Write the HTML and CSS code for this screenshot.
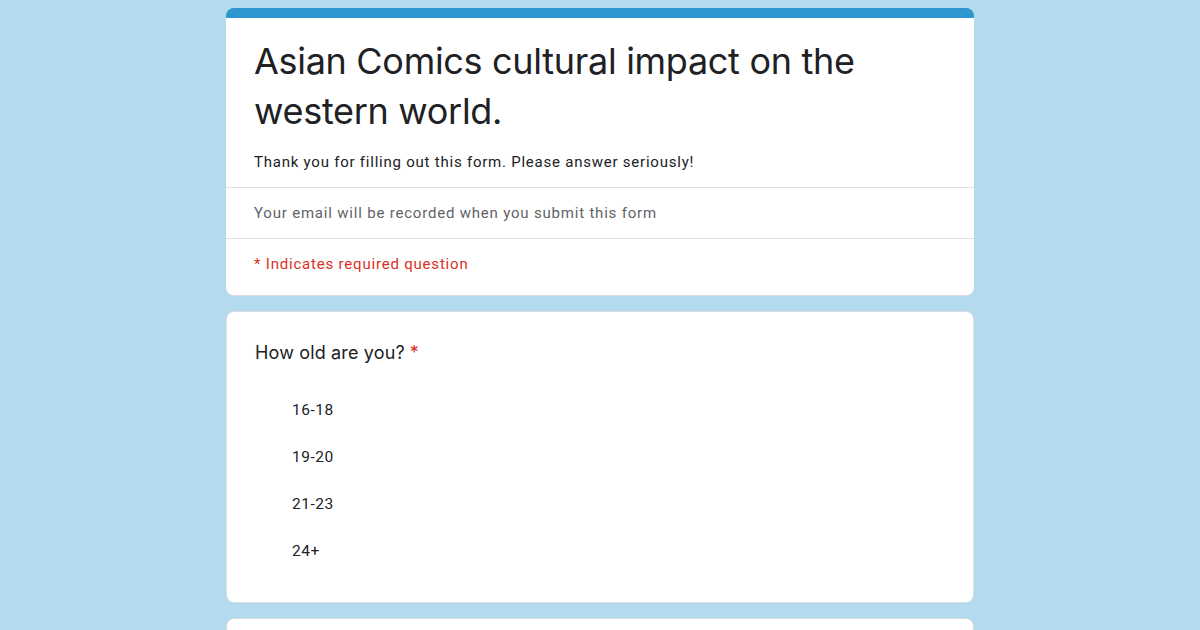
FILE: index.html
```html
<!DOCTYPE html>
<html lang="en">
<head>
<meta charset="utf-8">
<title>Asian Comics cultural impact on the western world.</title>
<link rel="stylesheet" href="styles.css">
</head>
<body>
<main class="form">
  <section class="card header-card">
    <div class="header-main">
      <h1 class="title">Asian Comics cultural impact on the western world.</h1>
      <p class="desc">Thank you for filling out this form. Please answer seriously!</p>
    </div>
    <div class="row email">Your email will be recorded when you submit this form</div>
    <div class="row required">* Indicates required question</div>
  </section>
  <section class="card question">
    <div class="q-title">How old are you?<span class="star">*</span></div>
    <ul class="options">
      <li class="opt">16-18</li>
      <li class="opt">19-20</li>
      <li class="opt">21-23</li>
      <li class="opt">24+</li>
    </ul>
  </section>
  <section class="card question next"></section>
</main>
</body>
</html>
```
FILE: styles.css
```css
html, body {
  margin: 0;
  padding: 0;
  background: #b4daed;
  height: 630px;
  overflow: hidden;
}
body {
  font-family: Roboto, "Liberation Sans", Arial, sans-serif;
  color: #202124;
}
.form {
  width: 748px;
  margin: 8px auto 0;
  display: flex;
  flex-direction: column;
  gap: 15px;
}
.card {
  background: #fff;
  border: 1px solid #dadce0;
  border-radius: 8px;
  box-sizing: border-box;
}
.header-card {
  border-top: 10px solid #2e97cf;
  border-left: 0;
  border-right: 0;
}
.header-main {
  padding: 18px 28px 15px;
  border-bottom: 1px solid #e0e0e0;
}
.title {
  margin: 0;
  font-family: Inter, "Open Sans", sans-serif;
  font-weight: 400;
  font-size: 36px;
  line-height: 50px;
  letter-spacing: -0.3px;
  color: #202124;
}
.desc {
  margin: 16px 0 0;
  font-size: 15px;
  line-height: 20px;
  letter-spacing: 0.77px;
}
.row {
  padding: 0 28px;
  font-size: 15px;
  line-height: 20px;
  letter-spacing: 0.8px;
}
.email {
  color: #5f6368;
  padding-top: 15px;
  padding-bottom: 15px;
  border-bottom: 1px solid #e0e0e0;
}
.required {
  color: #d93025;
  padding-top: 15px;
  padding-bottom: 21px;
}
.question {
  height: 292px;
  padding: 29px 28px 0;
}
.q-title {
  font-family: Inter, "Open Sans", sans-serif;
  font-size: 18px;
  line-height: 24px;
  letter-spacing: 0.15px;
}
.star {
  color: #d93025;
  margin-left: 5px;
}
.options {
  list-style: none;
  margin: 22px 0 0;
  padding: 0 0 0 37px;
}
.opt {
  font-size: 15.5px;
  line-height: 20px;
  letter-spacing: 0.5px;
  padding: 13px 0 14px;
}
.next {
  height: 60px;
}
```
